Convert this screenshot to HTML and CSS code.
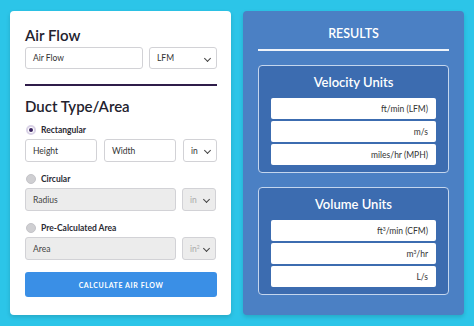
FILE: index.html
```html
<!DOCTYPE html>
<html lang="en">
<head>
    <meta charset="UTF-8">
    <meta name="viewport" content="width=device-width, initial-scale=1.0">
    <title>Air Flow Calculator</title>
    <link rel="stylesheet" href="styles.css">
</head>
<body>

    <div class="page">
        <div class="card calc">
            <h2>Air Flow</h2>
            <div class="row">
                <div class="field wide">Air Flow</div>
                <div class="select unit">LFM <span class="chev"></span></div>
            </div>

            <hr class="divider">

            <h2 class="duct-title">Duct Type/Area</h2>

            <div class="radio-row first">
                <span class="radio on"></span> Rectangular
            </div>
            <div class="row">
                <div class="field half">Height</div>
                <div class="field half">Width</div>
                <div class="select small">in <span class="chev"></span></div>
            </div>

            <div class="radio-row">
                <span class="radio"></span> Circular
            </div>
            <div class="row">
                <div class="field grow off">Radius</div>
                <div class="select small off">in <span class="chev"></span></div>
            </div>

            <div class="radio-row">
                <span class="radio"></span> Pre-Calculated Area
            </div>
            <div class="row">
                <div class="field grow off">Area</div>
                <div class="select small off">in<sup>2</sup> <span class="chev"></span></div>
            </div>

            <button class="calc-btn" type="button">CALCULATE AIR FLOW</button>
        </div>

        <div class="card results">
            <h3>RESULTS</h3>
            <hr class="divider light">

            <div class="box">
                <h4>Velocity Units</h4>
                <div class="out">ft/min (LFM)</div>
                <div class="out">m/s</div>
                <div class="out">miles/hr (MPH)</div>
            </div>

            <div class="box second">
                <h4>Volume Units</h4>
                <div class="out">ft<sup>3</sup>/min (CFM)</div>
                <div class="out">m<sup>3</sup>/hr</div>
                <div class="out">L/s</div>
            </div>
        </div>
    </div>

</body>
</html>
```

FILE: styles.css
```css
body {
    margin: 0;
    background: #2cc5e8;
    font-family: Lato, "Noto Sans", sans-serif;
    color: #2a2a33;
}

.page {
    display: flex;
    gap: 12px;
    padding: 11px 10px;
}

.card {
    width: 221px;
    height: 304px;
    box-sizing: border-box;
    border-radius: 4px;
    box-shadow: 0px 2px 4px rgba(0,0,0,0.15);
}

.calc {
    background: white;
    padding: 16px 14px 0 15px;
}

h2 {
    margin: 0;
    font-size: 15px;
    line-height: 16px;
    font-weight: 600;
    color: #23222e;
}

.row {
    display: flex;
    gap: 6px;
    margin-top: 4px;
}

.field, .select {
    height: 22px;
    box-sizing: border-box;
    border: 1px solid #d2d2d6;
    border-radius: 3px;
    font-size: 8.5px;
    display: flex;
    align-items: center;
    padding-left: 7px;
    color: #333;
}

.wide { width: 118px; }
.unit { width: 68px; }
.half { width: 72px; height: 23px; margin-right: 1px; }
.grow { width: 151px; height: 23px; }
.small { width: 34px; height: 23px; }

.select {
    position: relative;
}

.select sup {
    font-size: 5px;
    margin-top: -4px;
}

.chev {
    position: absolute;
    right: 6px;
    top: 8px;
    width: 4px;
    height: 4px;
    border-right: 1px solid #444;
    border-bottom: 1px solid #444;
    transform: rotate(45deg);
}

.off {
    background: #ececec;
    color: #444;
}

.select.off {
    color: #aaa;
}

.divider {
    margin: 15px 0 0 0;
    border: none;
    height: 2px;
    background: #2f1d4a;
}

.duct-title {
    margin-top: 12px;
}

.radio-row {
    display: flex;
    align-items: center;
    gap: 5px;
    height: 10px;
    margin-top: 12px;
    margin-bottom: 1px;
    font-size: 8.5px;
    font-weight: 700;
    color: #2a2a33;
    padding-left: 1px;
}

.radio-row.first {
    margin-top: 11px;
}

.radio {
    width: 10px;
    height: 10px;
    box-sizing: border-box;
    border-radius: 50%;
    background: #cfcfd2;
    border: 1px solid #c4c4c8;
}

.radio.on {
    background: white;
    border: 2px solid #d9d2e6;
    position: relative;
}

.radio.on::after {
    content: "";
    position: absolute;
    left: 1px;
    top: 1px;
    width: 4px;
    height: 4px;
    border-radius: 50%;
    background: #3a2460;
}

.calc-btn {
    display: block;
    width: 192px;
    height: 25px;
    margin-top: 12px;
    border: none;
    border-radius: 3px;
    background: #3a8fe6;
    color: white;
    font-family: Lato, "Noto Sans", sans-serif;
    font-size: 7px;
    font-weight: 700;
    letter-spacing: 0.6px;
    cursor: pointer;
}

.results {
    background: #4b80c4;
    padding: 15px 15px 0 15px;
    color: white;
}

h3 {
    margin: 0;
    text-align: center;
    font-size: 12.5px;
    line-height: 16px;
    font-weight: 600;
}

.divider.light {
    margin-top: 7px;
    background: #eef3fa;
}

.box {
    margin-top: 14px;
    background: #3c6cb0;
    border: 1px solid #c4d6ee;
    border-radius: 4px;
    padding: 8px 12px 7px 12px;
}

.box.second {
    margin-top: 14px;
}

h4 {
    margin: 0 0 8px 0;
    text-align: center;
    font-size: 13px;
    line-height: 16px;
    font-weight: 600;
}

.out {
    height: 21px;
    margin-top: 2px;
    background: white;
    border-radius: 2px;
    color: #333;
    font-size: 8.5px;
    display: flex;
    align-items: center;
    justify-content: flex-end;
    padding-right: 8px;
}

.out sup {
    font-size: 5px;
    margin-top: -4px;
}
```
